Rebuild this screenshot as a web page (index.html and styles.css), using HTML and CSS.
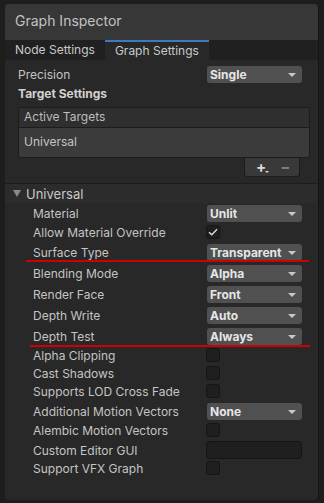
FILE: index.html
```html
<!DOCTYPE html>
<html lang="en">
  <head>
    <meta charset="UTF-8" />
    <meta name="viewport" content="width=device-width, initial-scale=1.0" />
    <title>Graph Inspector</title>
    <link rel="stylesheet" href="styles.css">
  </head>
  <body>
    <div class="panel">
      <div class="header">Graph Inspector</div>
      <div class="tabs">
        <div class="tab">Node Settings</div>
        <div class="tab active">Graph Settings</div>
      </div>

      <div class="content">
        <div class="row top dd-row">
          <span class="label">Precision</span>
          <div class="dropdown">Single<span class="arrow"></span></div>
        </div>
        <div class="row top heading">Target Settings</div>

        <div class="targets">
          <div class="targets-head">Active Targets</div>
          <div class="targets-item">Universal</div>
        </div>
        <div class="targets-btns">
          <span class="plus">+<span class="tiny"></span></span>
          <span class="minus">−</span>
        </div>
      </div>

      <div class="foldout"><span class="tri"></span>Universal</div>

      <div class="section">
        <div class="row dd-row">
          <span class="label">Material</span>
          <div class="dropdown">Unlit<span class="arrow"></span></div>
        </div>
        <div class="row cb-row">
          <span class="label">Allow Material Override</span>
          <div class="checkbox checked">
            <svg width="10" height="8" viewBox="0 0 10 8"><path d="M1 4.2 L3.8 6.8 L9 1.2" fill="none" stroke="#dcdcdc" stroke-width="1.4"/></svg>
          </div>
        </div>
        <div class="row dd-row">
          <span class="label">Surface Type</span>
          <div class="dropdown">Transparent<span class="arrow"></span></div>
          <span class="mark mark-a"></span>
        </div>
        <div class="row dd-row">
          <span class="label">Blending Mode</span>
          <div class="dropdown">Alpha<span class="arrow"></span></div>
        </div>
        <div class="row dd-row">
          <span class="label">Render Face</span>
          <div class="dropdown">Front<span class="arrow"></span></div>
        </div>
        <div class="row dd-row">
          <span class="label">Depth Write</span>
          <div class="dropdown">Auto<span class="arrow"></span></div>
        </div>
        <div class="row dd-row">
          <span class="label">Depth Test</span>
          <div class="dropdown">Always<span class="arrow"></span></div>
          <span class="mark mark-b"></span>
        </div>
        <div class="row cb-row">
          <span class="label">Alpha Clipping</span>
          <div class="checkbox"></div>
        </div>
        <div class="row cb-row">
          <span class="label">Cast Shadows</span>
          <div class="checkbox"></div>
        </div>
        <div class="row cb-row">
          <span class="label">Supports LOD Cross Fade</span>
          <div class="checkbox"></div>
        </div>
        <div class="row dd-row">
          <span class="label">Additional Motion Vectors</span>
          <div class="dropdown">None<span class="arrow"></span></div>
        </div>
        <div class="row cb-row">
          <span class="label">Alembic Motion Vectors</span>
          <div class="checkbox"></div>
        </div>
        <div class="row tf-row">
          <span class="label">Custom Editor GUI</span>
          <div class="textfield"></div>
        </div>
        <div class="row cb-row">
          <span class="label">Support VFX Graph</span>
          <div class="checkbox"></div>
        </div>
      </div>
    </div>
  </body>
</html>
```

FILE: styles.css
```css
body {
  margin: 0;
  padding: 4px 6px 0 5px;
  background-color: #1d1d1d;
  font-family: "Inter", "Noto Sans", sans-serif;
  font-size: 12px;
  color: #c4c4c4;
  height: 503px;
  box-sizing: border-box;
  overflow: hidden;
}
.panel {
  height: 496px;
  background-color: #282828;
  border-radius: 4px;
  overflow: hidden;
  box-shadow: 1px 0 0 #151515;
}
.header {
  height: 36px;
  line-height: 34px;
  padding-left: 10px;
  background-color: #373737;
  font-size: 14px;
  color: #c2c2c2;
}
.tabs {
  display: flex;
  height: 20px;
  background-color: #202020;
}
.tab {
  padding: 0 10px;
  line-height: 20px;
  font-size: 12px;
  color: #c8c8c8;
  white-space: nowrap;
}
.tab.active {
  background-color: #282828;
  border-top: 2px solid #3b7bc4;
  line-height: 18px;
}
.content {
  padding: 4px 8px 0 13px;
}
.row {
  display: flex;
  align-items: center;
  position: relative;
}
.top {
  padding-right: 8px;
}
.dd-row {
  height: 21px;
}
.cb-row {
  height: 18px;
  padding-bottom: 2px;
  box-sizing: border-box;
}
.tf-row {
  height: 20px;
}
.label {
  flex: 1;
}
.heading {
  height: 16px;
  font-weight: bold;
  color: #d2d2d2;
}
.dropdown {
  width: 95px;
  height: 17px;
  box-sizing: border-box;
  padding-left: 3px;
  line-height: 17px;
  background-color: #505050;
  border-radius: 3px;
  font-weight: bold;
  color: #e6e6e6;
  position: relative;
}
.arrow {
  position: absolute;
  right: 6px;
  top: 7px;
  border-left: 4px solid transparent;
  border-right: 4px solid transparent;
  border-top: 4px solid #c8c8c8;
}
.checkbox {
  width: 14px;
  height: 14px;
  box-sizing: border-box;
  margin-right: 82px;
  background-color: #1f1f1f;
  border: 1px solid #151515;
  border-radius: 3px;
  display: flex;
  align-items: center;
  justify-content: center;
}
.textfield {
  width: 96px;
  height: 18px;
  box-sizing: border-box;
  background-color: #1f1f1f;
  border: 1px solid #151515;
  border-radius: 3px;
}
.targets {
  margin-top: 6px;
  border: 1px solid #1c1c1c;
  border-radius: 3px;
  overflow: hidden;
}
.targets-head {
  height: 19px;
  line-height: 18px;
  padding-left: 5px;
  background-color: #2f2f2f;
  border-bottom: 1px solid #1c1c1c;
  color: #bdbdbd;
}
.targets-item {
  height: 29px;
  line-height: 27px;
  padding-left: 5px;
  background-color: #3b3b3b;
  color: #c4c4c4;
}
.targets-btns {
  display: flex;
  gap: 14px;
  margin-left: auto;
  margin-right: 10px;
  width: 56px;
  height: 19px;
  box-sizing: border-box;
  padding-left: 11px;
  background-color: #393939;
  border: 1px solid #1c1c1c;
  border-top: none;
  border-radius: 0 0 3px 3px;
  line-height: 17px;
  font-size: 15px;
  font-weight: bold;
}
.plus {
  color: #d8d8d8;
  position: relative;
}
.tiny {
  position: absolute;
  right: -3px;
  bottom: 3px;
  border-left: 2px solid transparent;
  border-right: 2px solid transparent;
  border-top: 2px solid #d8d8d8;
}
.minus {
  color: #808080;
}
.foldout {
  margin-top: 6px;
  height: 20px;
  box-sizing: border-box;
  line-height: 18px;
  padding-left: 8px;
  background-color: #2c2c2c;
  border-top: 1px solid #1c1c1c;
  font-size: 13px;
  color: #c8c8c8;
  display: flex;
  align-items: center;
}
.tri {
  width: 0;
  height: 0;
  margin-right: 5px;
  border-left: 4px solid transparent;
  border-right: 4px solid transparent;
  border-top: 7px solid #8a8a8a;
}
.section {
  padding: 0 16px 0 28px;
}
.mark {
  position: absolute;
  height: 2px;
  background-color: #d00000;
}
.mark-a {
  left: -7px;
  right: -7px;
  bottom: 1px;
}
.mark-b {
  left: -3px;
  right: -8px;
  bottom: 0;
}
```
